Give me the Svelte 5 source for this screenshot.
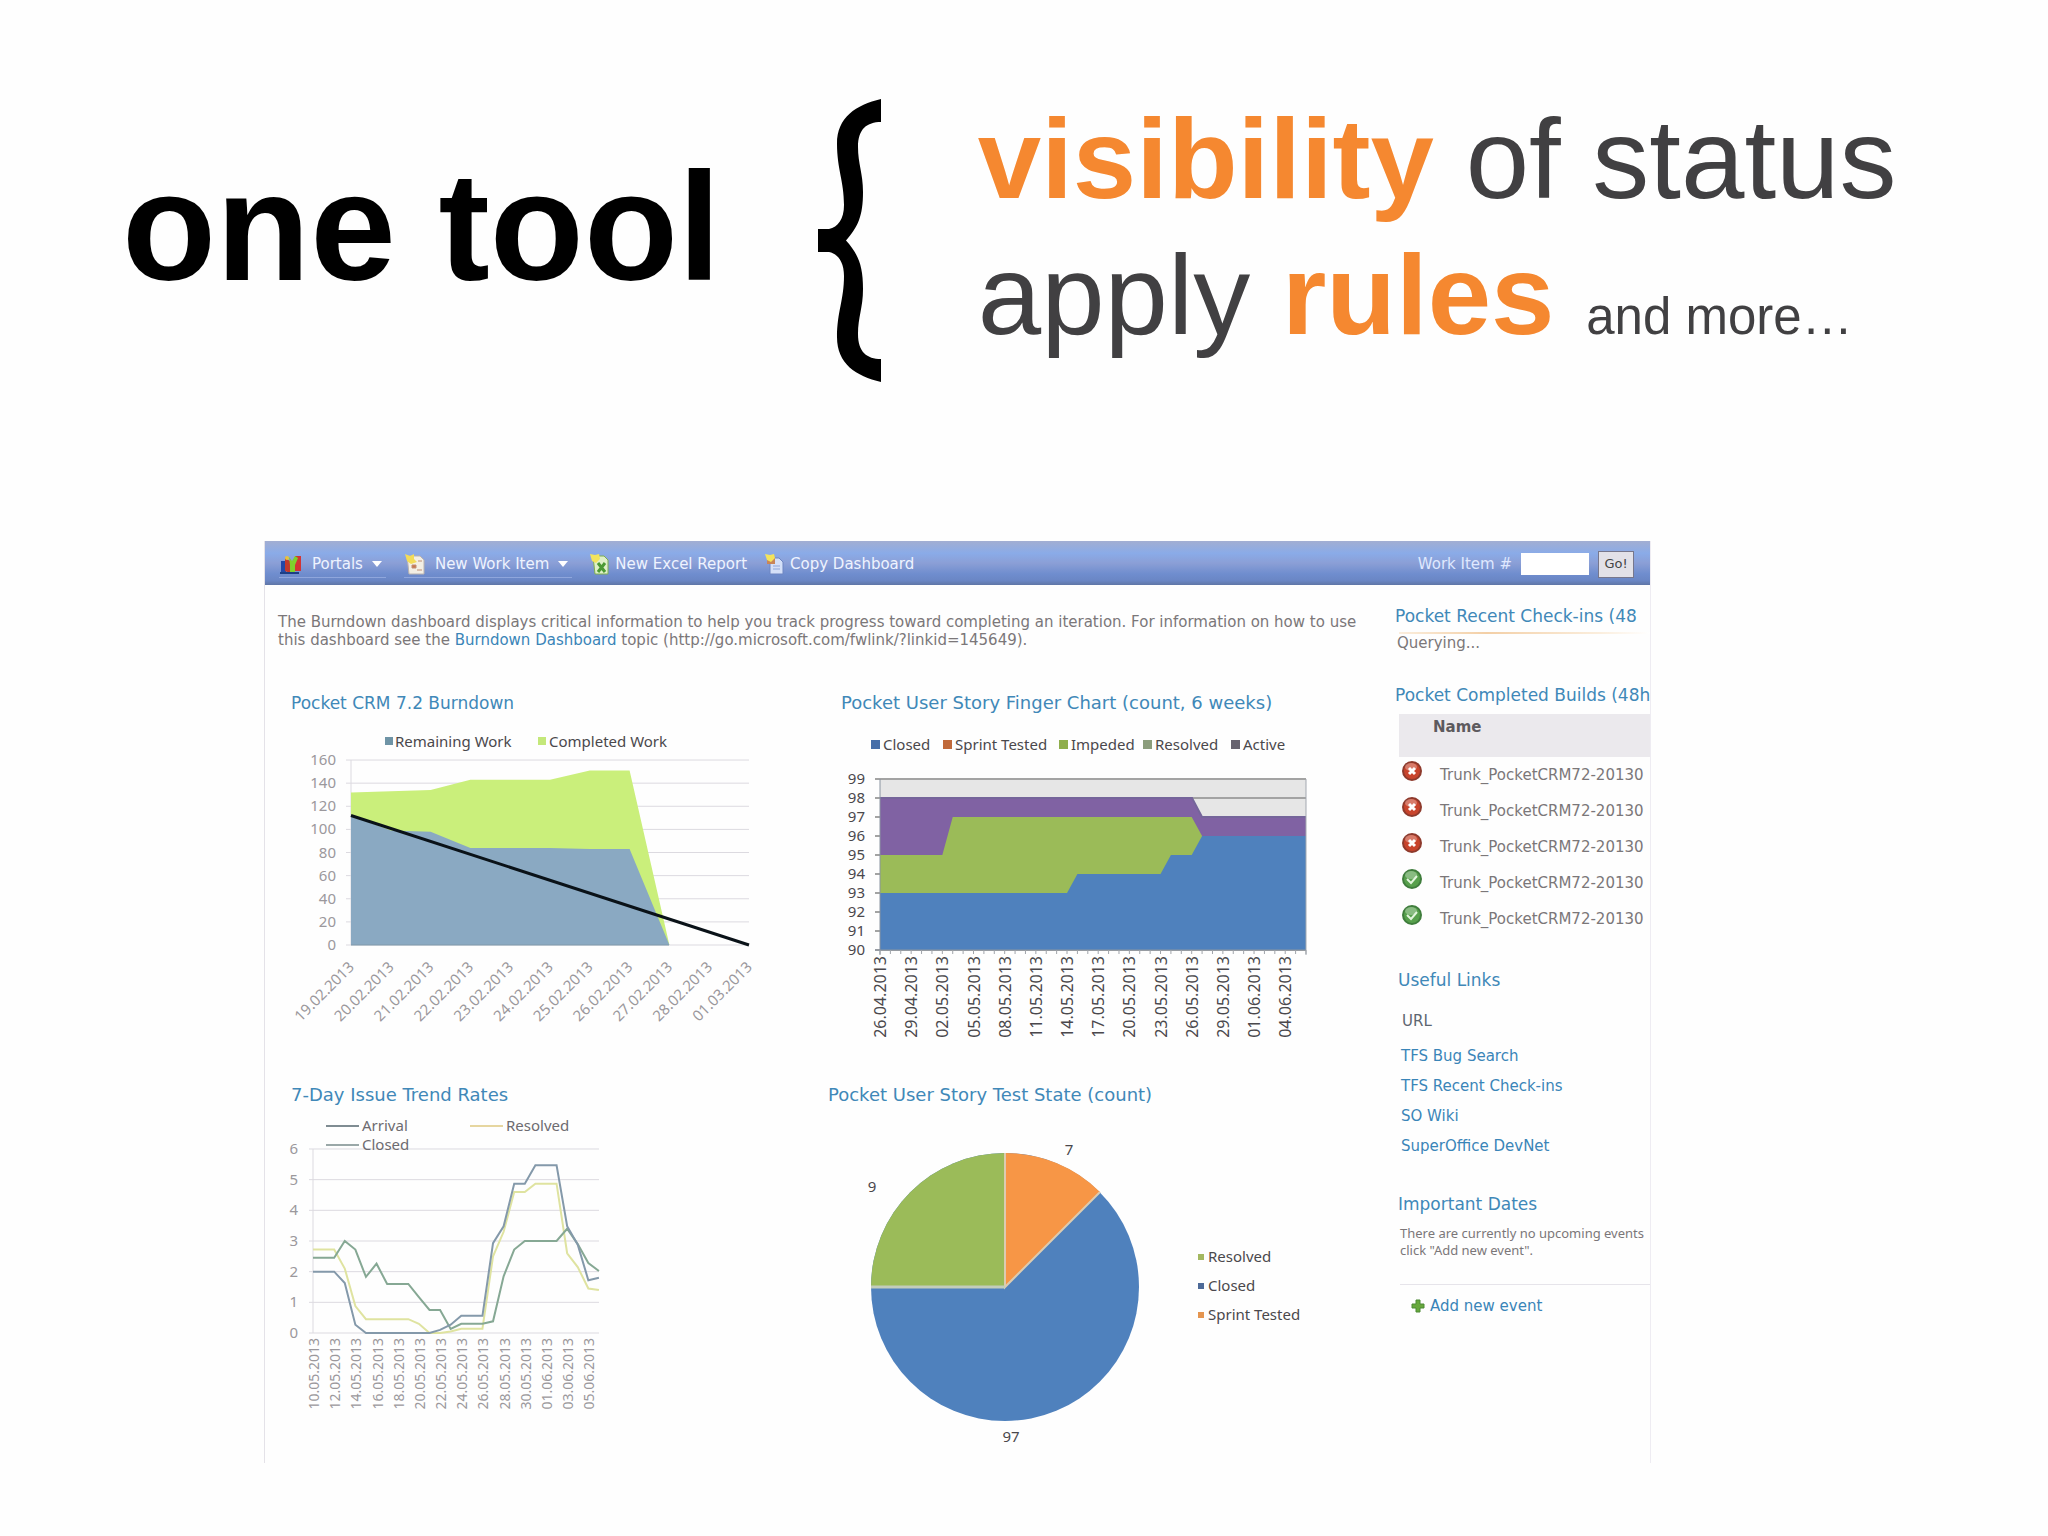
<script>
  // Burndown chart: one point per day, plotted in drawing coordinates
  const burnX = (d) => 351 + d * 39.8;
  const burnY = (v) => 945 - v * 1.156;
  const burnDates = ['19.02.2013', '20.02.2013', '21.02.2013', '22.02.2013', '23.02.2013', '24.02.2013', '25.02.2013', '26.02.2013', '27.02.2013', '28.02.2013', '01.03.2013'];
  const burnTicks = [0, 20, 40, 60, 80, 100, 120, 140, 160];
  const total = [132, 133, 134, 143, 143, 143, 151, 151, 0];
  const remaining = [112, 99, 98, 84, 84, 84, 83, 83, 0];
  const burnArea = (vals) => [`${burnX(0)},945`, ...vals.map((v, i) => `${burnX(i)},${burnY(v)}`)].join(' ');

  // Finger chart: [day, value] corners of the stacked areas
  const fingX = (d) => 880 + d * 10.39;
  const fingY = (v) => 950 - (v - 90) * 19;
  const fingArea = (pts) => [[0, 90], ...pts, [41, 90]].map(([d, v]) => `${fingX(d)},${fingY(v)}`).join(' ');
  const active = [[0, 98], [30, 98], [31, 97], [41, 97]];
  const impeded = [[0, 95], [6, 95], [7, 97], [30, 97], [31, 96], [41, 96]];
  const closed = [[0, 93], [18, 93], [19, 94], [27, 94], [28, 95], [30, 95], [31, 96], [41, 96]];
  const fingTicks = [90, 91, 92, 93, 94, 95, 96, 97, 98, 99];
  const fingDays = Array.from({ length: 42 }, (_, i) => i);
  const fingDates = ['26.04.2013', '29.04.2013', '02.05.2013', '05.05.2013', '08.05.2013', '11.05.2013', '14.05.2013', '17.05.2013', '20.05.2013', '23.05.2013', '26.05.2013', '29.05.2013', '01.06.2013', '04.06.2013'];
  const fingLegend = [
    { x: 871, name: 'Closed', color: '#466ea8' },
    { x: 943, name: 'Sprint Tested', color: '#c0693a' },
    { x: 1059, name: 'Impeded', color: '#8fae4c' },
    { x: 1143, name: 'Resolved', color: '#8b9d7c' },
    { x: 1231, name: 'Active', color: '#67636f' }
  ];

  // Trend chart: one value per day
  const trendX = (d) => 313 + d * 10.59;
  const trendY = (v) => 1333 - v * 30.67;
  const trendLine = (vals) => vals.map((v, i) => `${trendX(i)},${trendY(v)}`).join(' ');
  const arrival = [2, 2, 2, 1.63, 0.27, 0, 0, 0, 0, 0, 0, 0, 0.1, 0.27, 0.56, 0.56, 0.56, 2.93, 3.48, 4.87, 4.87, 5.47, 5.47, 5.47, 3.48, 2.88, 1.72, 1.8];
  const closedRate = [2.45, 2.45, 2.45, 3, 2.72, 1.83, 2.26, 1.6, 1.6, 1.6, 1.17, 0.75, 0.75, 0.13, 0.3, 0.3, 0.3, 0.38, 1.85, 2.72, 3, 3, 3, 3, 3.4, 2.9, 2.28, 2.02];
  const resolvedRate = [2.72, 2.72, 2.72, 2.1, 0.88, 0.45, 0.45, 0.45, 0.45, 0.45, 0.3, 0, 0, 0.05, 0.14, 0.14, 0.14, 2.5, 3.3, 4.6, 4.6, 4.87, 4.87, 4.87, 2.6, 2.15, 1.45, 1.4];
  const trendTicks = [0, 1, 2, 3, 4, 5, 6];
  const trendDates = ['10.05.2013', '12.05.2013', '14.05.2013', '16.05.2013', '18.05.2013', '20.05.2013', '22.05.2013', '24.05.2013', '26.05.2013', '28.05.2013', '30.05.2013', '01.06.2013', '03.06.2013', '05.06.2013'];

  const pieLegend = [
    { y: 1257, name: 'Resolved', color: '#a3b860' },
    { y: 1286, name: 'Closed', color: '#4d6a98' },
    { y: 1315, name: 'Sprint Tested', color: '#e5954f' }
  ];

  const builds = [false, false, false, true, true];
  const links = ['TFS Bug Search', 'TFS Recent Check-ins', 'SO Wiki', 'SuperOffice DevNet'];
</script>

<div class="slide">
  <header>
    <h1>one tool</h1>
    <svg class="brace" viewBox="0 0 63 283" aria-hidden="true">
      <path d="M63 0 C38 6 19 18 19 45 C19 70 26 82 26 106 C26 120 20 128 11 130 H0 V153 H11 C20 155 26 163 26 177 C26 201 19 213 19 238 C19 265 38 277 63 283 V260 C49 260 40 253 40 235 C40 218 45 209 45 190 C45 166 40 155 28 141.500 C40 128 45 117 45 93 C45 74 40 65 40 48 C40 30 49 23 63 23 Z" />
    </svg>
    <p><b>visibility</b> of status<br />apply <b>rules</b> <small>and more…</small></p>
  </header>

  <div class="stage">
    <section class="panel">
      <div class="toolbar">
        <button class="drop">
          <svg width="24" height="22" viewBox="0 0 24 22" aria-hidden="true">
            <path d="M2 8h5v12H2z" fill="#2348a8" /><path d="M16 3h6v15h-6z" fill="#d23434" />
            <path d="M6 5l5 3v12l-5-2z" fill="#c23a2c" /><path d="M10 4l3 4 3-5 3 2-3 7v8h-5v-8z" fill="#7ed02c" />
            <path d="M1 20h19" stroke="#1c3f86" stroke-width="2" /><circle cx="8" cy="5" r="2" fill="#e8c23c" />
          </svg>
          Portals
          <svg class="caret" width="10" height="6" viewBox="0 0 10 6" aria-hidden="true"><path d="M0 0h10L5 6z" fill="#fff" /></svg>
        </button>
        <button class="drop">
          <svg width="22" height="22" viewBox="0 0 22 22" aria-hidden="true">
            <path d="M3 3h13l4 4v14H5z" fill="#f3efe4" stroke="#b9b3b0" /><path d="M1 1l5 2 4-2 0 5 3 3-6 2-4-3z" fill="#f3dc58" />
            <path d="M8 12h4v3H8zM14 8h4M13 17h5" fill="#c9764f" stroke="#c08e74" />
          </svg>
          New Work Item
          <svg class="caret" width="10" height="6" viewBox="0 0 10 6" aria-hidden="true"><path d="M0 0h10L5 6z" fill="#fff" /></svg>
        </button>
        <button>
          <svg width="20" height="22" viewBox="0 0 20 22" aria-hidden="true">
            <path d="M3 3h11l4 4v14H5z" fill="#dff0c8" stroke="#7fae50" /><path d="M8 10l7 9M15 10l-7 9" stroke="#4c9a34" stroke-width="3" />
            <path d="M0 1l5 1 4-1 1 5-4 4-4-2z" fill="#f3e45c" />
          </svg>
          New Excel Report
        </button>
        <button>
          <svg width="20" height="22" viewBox="0 0 20 22" aria-hidden="true">
            <path d="M5 5h9l4 4v12H5z" fill="#d5e0f8" stroke="#6f86c2" /><path d="M2 4h8v7H2z" fill="#c98558" />
            <path d="M0 1l5 1 4-1 1 4-4 4-4-2z" fill="#f3e45c" /><path d="M8 13h7M8 16h7" stroke="#8fa6da" />
          </svg>
          Copy Dashboard
        </button>
        <form onsubmit={(e) => e.preventDefault()}>
          <label for="item">Work Item #</label>
          <input id="item" type="text" />
          <button class="go">Go!</button>
        </form>
      </div>

      <div class="body">
        <main>
          <p class="intro">
            The Burndown dashboard displays critical information to help you track progress toward completing an iteration. For information on how to use<br />
            this dashboard see the <a href="#burndown">Burndown Dashboard</a> topic (http://go.microsoft.com/fwlink/?linkid=145649).
          </p>

          <div class="charts">
            <section>
              <h2>Pocket CRM 7.2 Burndown</h2>
              <svg class="chart pale" viewBox="265 715 545 368" role="img" aria-label="Burndown">
                <g class="legend">
                  <rect x="385" y="737" width="8" height="8" fill="#6f94a6" /><text x="395" y="747">Remaining Work</text>
                  <rect x="538" y="737" width="8" height="8" fill="#c4e87a" /><text x="549" y="747">Completed Work</text>
                </g>
                {#each burnTicks as t}
                  <line x1="346" x2="749" y1={burnY(t)} y2={burnY(t)} stroke="#dcdae0" />
                  <text x="336" y={burnY(t) + 5} text-anchor="end">{t}</text>
                {/each}
                <line x1="351" x2="351" y1="760" y2="945" stroke="#dcdae0" />
                <polygon points={burnArea(total)} fill="#caef7b" />
                <polygon points={burnArea(remaining)} fill="#8aa9c2" />
                <line x1="351" x2="669" y1="945" y2="945" stroke="#8098aa" />
                <line x1={burnX(0)} y1={burnY(112)} x2={burnX(10)} y2="945" stroke="#0a1218" stroke-width="3" />
                {#each burnDates as d, i}
                  <text transform="translate({burnX(i) + 4} 968) rotate(-45)" text-anchor="end">{d}</text>
                {/each}
              </svg>
            </section>

            <section>
              <h2 class="big wide">Pocket User Story Finger Chart (count, 6 weeks)</h2>
              <svg class="chart dark" viewBox="810 715 585 368" role="img" aria-label="Finger chart">
                <g class="legend">
                  {#each fingLegend as l}
                    <rect x={l.x} y="740" width="9" height="9" fill={l.color} /><text x={l.x + 12} y="750">{l.name}</text>
                  {/each}
                </g>
                <rect x="880" y="779" width="426" height="171" fill="#e6e6e6" />
                {#each fingTicks as t}
                  <line x1="875" x2="1306" y1={fingY(t)} y2={fingY(t)} stroke="#a3a3a3" stroke-width="2" />
                  <text x="865" y={fingY(t) + 5} text-anchor="end">{t}</text>
                {/each}
                <polygon points={`${fingX(30)},799 1306,799 1306,817 ${fingX(31)},817`} fill="#e6e6e6" />
                <polygon points={fingArea(active)} fill="#8062a3" />
                <polygon points={fingArea(impeded)} fill="#9bbb58" />
                <polygon points={fingArea(closed)} fill="#4f81bd" />
                <polyline points="880,798 1192,798 1202,817 1306,817" fill="none" stroke="#75659a" stroke-width="2" />
                <line x1="880" x2="880" y1="779" y2="955" stroke="#8a94a0" />
                <line x1="1306" x2="1306" y1="779" y2="955" stroke="#a3a8b0" />
                <line x1="875" x2="1306" y1="950" y2="950" stroke="#8a94a0" />
                {#each fingDays as d}
                  <line x1={fingX(d)} x2={fingX(d)} y1="950" y2="954" stroke="#a0a4aa" />
                {/each}
                {#each fingDates as d, i}
                  <text class="date" transform="translate({fingX(i * 3) + 6} 956) rotate(-90)" text-anchor="end">{d}</text>
                {/each}
              </svg>
            </section>

            <section>
              <h2 class="big">7-Day Issue Trend Rates</h2>
              <svg class="chart pale" viewBox="265 1107 545 356" role="img" aria-label="Trend rates">
                {#each trendTicks as t}
                  <line x1="309" x2="599" y1={trendY(t)} y2={trendY(t)} stroke="#dcdae0" />
                  <text x="298" y={trendY(t) + 5} text-anchor="end">{t}</text>
                {/each}
                <line x1="313" x2="313" y1="1149" y2="1333" stroke="#dcdae0" />
                <g class="lines" fill="none" stroke-width="2">
                  <polyline points={trendLine(resolvedRate)} stroke="#dfe3a0" />
                  <polyline points={trendLine(closedRate)} stroke="#86a894" />
                  <polyline points={trendLine(arrival)} stroke="#8499aa" />
                  <line x1="326" x2="359" y1="1126" y2="1126" stroke="#7f8c92" />
                  <line x1="470" x2="503" y1="1126" y2="1126" stroke="#e6d6a0" />
                  <line x1="326" x2="359" y1="1145" y2="1145" stroke="#9aa8a8" />
                </g>
                <g class="legend soft">
                  <text x="362" y="1131">Arrival</text>
                  <text x="506" y="1131">Resolved</text>
                  <text x="362" y="1150">Closed</text>
                </g>
                {#each trendDates as d, i}
                  <text class="small" transform="translate({trendX(i * 2) + 6} 1338) rotate(-90)" text-anchor="end">{d}</text>
                {/each}
              </svg>
            </section>

            <section>
              <h2 class="big near">Pocket User Story Test State (count)</h2>
              <svg class="chart dark" viewBox="810 1107 585 356" role="img" aria-label="Test state">
                <circle cx="1005" cy="1287" r="134" fill="#4f81bd" />
                <path d="M1005 1287V1153A134 134 0 0 1 1100 1192Z" fill="#f79646" />
                <path d="M1005 1287V1153A134 134 0 0 0 871 1287Z" fill="#9bbb59" />
                <path d="M1005 1153V1287L1100 1192" fill="none" stroke="#dccbb0" stroke-width="2" />
                <path d="M871 1287H1005" stroke="#c2cdbb" stroke-width="3" />
                <text x="1069" y="1155" text-anchor="middle">7</text>
                <text x="872" y="1192" text-anchor="middle">9</text>
                <text x="1011" y="1442" text-anchor="middle">97</text>
                <g class="legend">
                  {#each pieLegend as l}
                    <rect x="1198" y={l.y - 3} width="6" height="6" fill={l.color} /><text x="1208" y={l.y + 5}>{l.name}</text>
                  {/each}
                </g>
              </svg>
            </section>
          </div>
        </main>

        <aside>
          <h2>Pocket Recent Check-ins (48</h2>
          <div class="rule"></div>
          <p class="query">Querying...</p>

          <h2 class="gap">Pocket Completed Builds (48h</h2>
          <table>
            <thead><tr><th></th><th>Name</th></tr></thead>
            <tbody>
              {#each builds as ok}
                <tr>
                  <td class="state">
                    <svg width="20" height="20" viewBox="0 0 20 20" aria-hidden="true">
                      <circle cx="10" cy="10" r="9" fill={ok ? '#57a04c' : '#c8442c'} stroke={ok ? '#3f7d3c' : '#8e3a2c'} stroke-width="2" />
                      <ellipse cx="9" cy="6" rx="6" ry="4" fill="#fff" opacity="0.300" />
                      {#if ok}
                        <path d="M5 10l4 4 6-7" fill="none" stroke="#e2f5dc" stroke-width="2" />
                      {:else}
                        <path d="M7 7l6 6M13 7l-6 6" stroke="#fff" stroke-width="3" />
                      {/if}
                    </svg>
                  </td>
                  <td>Trunk_PocketCRM72-20130</td>
                </tr>
              {/each}
            </tbody>
          </table>

          <h2 class="gap in">Useful Links</h2>
          <p class="url">URL</p>
          <ul>
            {#each links as l}
              <li><a href="#link">{l}</a></li>
            {/each}
          </ul>

          <h2 class="gap in">Important Dates</h2>
          <p class="note">There are currently no upcoming events<br />click "Add new event".</p>
          <a class="add" href="#add">
            <svg width="14" height="14" viewBox="0 0 14 14" aria-hidden="true"><path d="M5 1h4v4h4v4H9v4H5V9H1V5h4z" fill="#67a83c" stroke="#4c8a34" /></svg>
            Add new event
          </a>
        </aside>
      </div>
    </section>
  </div>
</div>

<style>
  :global(body) { margin: 0; background: #fefefe; }
  .slide { font-family: 'DejaVu Sans', Verdana, sans-serif; overflow: hidden; padding-bottom: 73px; }
  h1, h2, p, ul { margin: 0; padding: 0; }

  header {
    display: flex; align-items: center; gap: 97px;
    padding: 91px 0 0 122px;
    font-family: 'Liberation Sans', Arial, sans-serif;
    white-space: nowrap;
  }
  h1 { font-size: 154px; line-height: 160px; padding-bottom: 27px; color: #000; }
  header p { font-size: 114px; line-height: 136px; padding-bottom: 27px; color: #414042; }
  header b { color: #f58830; }
  header small { font-size: 51px; line-height: 51px; }
  .brace { width: 63px; height: 283px; flex: none; }

  .stage { display: grid; grid-template-columns: 265fr 1385fr 398fr; margin-top: 151px; }
  .panel { grid-column: 2; min-width: 0; box-shadow: -1px 0 #e4e2e8, 1px 0 #eeecf2; }

  .toolbar {
    display: flex; align-items: center; box-sizing: border-box; height: 44px;
    padding: 2px 16px 0 14px; gap: 18px;
    background: linear-gradient(#a2aed2, #8aabe8 28%, #8b9fd6 50%, #6f8dce 75%, #6a86c4 90%, #5f76a6);
  }
  .toolbar button {
    display: flex; align-items: center; gap: 5px;
    border: 0; padding: 0; background: none;
    font: 15px/26px 'DejaVu Sans', Verdana, sans-serif; color: #eef3ff; white-space: nowrap;
  }
  .toolbar .drop { gap: 9px; border-bottom: 1px solid #8fa6dc; padding-right: 4px; }
  form { display: flex; align-items: center; gap: 9px; margin-left: auto; }
  label { font-size: 15px; color: #dfe8ff; }
  input { width: 68px; height: 22px; box-sizing: border-box; border: 0; background: #fff; }
  .toolbar .go {
    justify-content: center; width: 36px; height: 27px; box-sizing: border-box;
    border: 1px solid #77778c; background: #e2e1e8; color: #444; font-size: 13px; line-height: 20px;
  }

  .body { display: grid; grid-template-columns: 1130fr 255fr; background: #fefefe; }
  main { min-width: 0; }
  .intro { padding: 28px 0 42px 13px; font-size: 15px; line-height: 18px; color: #7b7779; white-space: nowrap; }
  a { color: #3a85b8; text-decoration: none; }
  .charts { display: grid; grid-template-columns: 545fr 585fr; }
  .charts section { min-width: 0; }
  h2 { font-size: 17px; line-height: 24px; font-weight: 400; color: #4088b8; white-space: nowrap; }
  .charts h2 { padding-left: 26px; }
  .charts .wide { padding-left: 31px; }
  .charts .near { padding-left: 18px; }
  .big { font-size: 18px; }

  .chart { display: block; width: 100%; font-family: 'Noto Sans', 'Open Sans', sans-serif; font-size: 15px; }
  .pale { fill: #9b989c; }
  .dark { fill: #4a484c; }
  .legend { fill: #4a484c; }
  .soft { fill: #6d6b70; }
  .date { font-size: 16px; }
  .small { font-size: 14px; }

  aside { min-width: 0; overflow: hidden; padding-top: 19px; font-size: 15px; line-height: 18px; color: #7b7779; white-space: nowrap; }
  .rule { height: 2px; margin: 4px 0 0 4px; background: linear-gradient(90deg, #fbeedd, #f3cfa6 35%, #fbeedd 80%, #fff); }
  .query { padding-left: 2px; }
  .gap { margin-top: 31px; }
  .in { padding-left: 3px; }
  table { border-collapse: collapse; margin: 7px 0 0 4px; width: 100%; }
  th { box-sizing: border-box; height: 43px; padding: 4px 0 0; background: #ebe9ed; text-align: left; vertical-align: top; color: #5d5a5e; }
  td { height: 36px; padding: 0 0 0 7px; vertical-align: middle; }
  .state { width: 31px; padding: 0 0 8px 3px; height: 28px; box-sizing: content-box; }
  .state svg { display: block; }
  .url { padding: 14px 0 5px 7px; line-height: 30px; color: #5d6670; }
  ul { list-style: none; padding-left: 6px; line-height: 30px; }
  .note { padding: 9px 0 25px; margin-left: 5px; border-bottom: 1px solid #e6e4ea; font: 13px/17px 'Noto Sans', 'Open Sans', sans-serif; }
  .add { display: flex; align-items: center; gap: 5px; padding: 12px 0 0 16px; }
</style>
